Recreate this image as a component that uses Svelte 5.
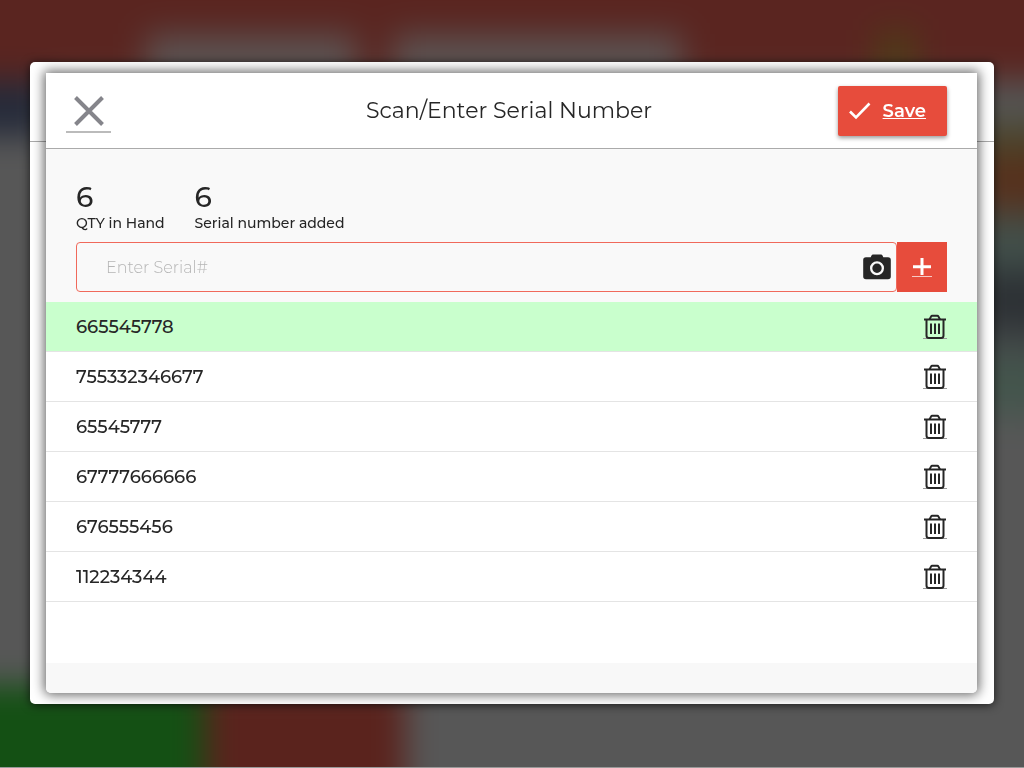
<script>
	let serials = $state([
		'665545778',
		'755332346677',
		'65545777',
		'67777666666',
		'676555456',
		'112234344'
	]);
	let quantity = 6;
	let value = $state('');

	function addSerial(event) {
		event.preventDefault();
		if (!value.trim()) return;
		serials.unshift(value.trim());
		value = '';
	}

	function removeSerial(index) {
		serials.splice(index, 1);
	}
</script>

<div class="backdrop" aria-hidden="true">
	<div class="page">
		<div class="page-header">
			<span class="pill"></span>
			<span class="pill wide"></span>
			<span class="dot"></span>
		</div>
		<div class="page-body">
			<span class="left-rail"></span>
			<span class="right-rail"></span>
		</div>
		<div class="page-footer">
			<span class="green"></span>
			<span class="red"></span>
		</div>
	</div>
</div>

<main>
	<div class="outer">
		<div class="dialog" role="dialog" aria-labelledby="title">
			<header>
				<button class="close" aria-label="Close">
					<svg width="30" height="30" viewBox="0 0 30 30">
						<path d="M1.500 1.500 28.500 28.500M28.500 1.500 1.500 28.500" stroke="#85858b" stroke-width="4" />
					</svg>
				</button>
				<h1 id="title">Scan/Enter Serial Number</h1>
				<button class="save">
					<svg width="22" height="18" viewBox="0 0 22 18">
						<path d="M1 9.5 7 15.5 20.5 1.5" fill="none" stroke="#fff" stroke-width="2.6" />
					</svg>
					<span>Save</span>
				</button>
			</header>

			<section class="entry">
				<div class="counts">
					<div>
						<strong>{quantity}</strong>
						<span>QTY in Hand</span>
					</div>
					<div>
						<strong>{serials.length}</strong>
						<span>Serial number added</span>
					</div>
				</div>
				<form onsubmit={addSerial}>
					<div class="field">
						<input type="text" aria-label="Serial number" placeholder="Enter Serial#" bind:value />
						<button type="button" class="camera" aria-label="Scan with camera">
							<svg width="28" height="26" viewBox="0 0 28 26">
								<path
									fill="#262626"
									fill-rule="evenodd"
									d="M10 .5h8q1 0 1.500 1l.8 1.700H25q2.800 0 2.800 2.800v16.500q0 2.800-2.800 2.800H3Q.2 25.300.2 22.500V6Q.2 3.200 3 3.200h4.700l.8-1.700Q9 .5 10 .5zM14 7.200a7 7 0 1 0 0 14 7 7 0 0 0 0-14zm0 2.300a4.700 4.700 0 1 1 0 9.400 4.700 4.700 0 0 1 0-9.400z"
								/>
							</svg>
						</button>
					</div>
					<button class="add" aria-label="Add serial number">
						<svg width="20" height="20" viewBox="0 0 20 20">
							<path d="M10 1v17M1 9.800h18" stroke="#fff" stroke-width="3" />
							<path d="M0 19.500h20" stroke="#fff" opacity="0.7" />
						</svg>
					</button>
				</form>
			</section>

			<ul>
				{#each serials as serial, index}
					<li class:latest={index === 0}>
						<span>{serial}</span>
						<button class="delete" aria-label="Delete {serial}" onclick={() => removeSerial(index)}>
							<svg width="24" height="26" viewBox="0 0 24 26" fill="none" stroke="#262626">
								<path d="M0 24.500h24" stroke="#999" />
								<path d="M1 5.500h22" stroke-width="2" />
								<path d="M6.500 5.500 8 2.600Q8.400 1.800 9.300 1.800h4.900q.9 0 1.300.8L17 5.500" stroke-width="2" />
								<path d="M3.500 6v15.500q0 2.500 2.500 2.500h12q2.500 0 2.500-2.500V6" stroke-width="2" />
								<path d="M8 9.500v10.500M12 9.500v10.500M16 9.500v10.500" stroke-width="2" />
							</svg>
						</button>
					</li>
				{/each}
			</ul>
			<footer></footer>
		</div>
	</div>
</main>

<style>
	:global(body) {
		margin: 0;
		background: #555;
	}
	.backdrop {
		position: fixed;
		inset: 0;
		overflow: hidden;
		border-bottom: 1px solid #999;
	}
	.page {
		display: flex;
		flex-direction: column;
		height: 100%;
		background: #575757;
		filter: blur(16px);
		/* push the blurred edges outside the window */
		margin: -40px;
		padding: 40px;
	}
	.page-header {
		display: flex;
		align-items: flex-end;
		gap: 36px;
		height: 80px;
		margin: -40px -40px 0;
		padding: 40px 40px 0 186px;
		background: #5a2520;
	}
	.pill {
		width: 24%;
		height: 46px;
		background: #5b5150;
	}
	.pill.wide {
		width: 33%;
	}
	.dot {
		width: 40px;
		height: 50px;
		margin-left: 18%;
		background: #4f3a18;
	}
	.page-body {
		flex: 1;
		display: flex;
		justify-content: space-between;
		margin: 0 -40px;
	}
	.left-rail {
		width: 90px;
		height: 56px;
		background: #262b3a;
	}
	.right-rail {
		width: 90px;
		background: linear-gradient(
			#555 0 30px,
			#4a4428 60px,
			#57301c 90px 115px,
			#42504b 150px 175px,
			#2c3034 205px 235px,
			#454a4a 265px,
			#43554c 290px 320px,
			#575757 350px
		);
	}
	.page-footer {
		display: flex;
		height: 82px;
		margin: 0 -40px -40px;
		padding-bottom: 40px;
	}
	.green {
		width: 245px;
		height: 130px;
		background: #145014;
	}
	.red {
		width: 200px;
		height: 130px;
		background: #5a231d;
	}

	main {
		position: relative;
		box-sizing: border-box;
		min-height: 100vh;
		padding: 62px 30px 64px;
		display: flex;
		font-family: Montserrat, Inter, 'Open Sans', sans-serif;
		color: #262626;
	}
	.outer {
		flex: 1;
		display: flex;
		padding: 11px 17px 11px 16px;
		border-radius: 5px;
		background: linear-gradient(#fff 79px, #aaa 79px 80px, #fff 80px);
		box-shadow: 0 1px 10px rgba(0, 0, 0, 0.7);
	}
	.dialog {
		flex: 1;
		min-width: 0;
		display: flex;
		flex-direction: column;
		background: #fff;
		border-radius: 0 0 5px 5px;
		box-shadow: 0 0 12px 2px rgba(0, 0, 0, 0.6);
	}
	button {
		border: 0;
		padding: 0;
		background: none;
		font: inherit;
		color: inherit;
		cursor: pointer;
	}
	svg {
		display: block;
	}

	header {
		display: grid;
		grid-template-columns: 1fr auto 1fr;
		align-items: center;
		height: 75px;
		padding: 0 30px 0 20px;
		border-bottom: 1px solid #aaa;
	}
	.close {
		display: flex;
		justify-content: center;
		width: 45px;
		padding: 7px 0 5px;
		border-bottom: 2px solid #bbb;
	}
	h1 {
		margin: 0;
		font-size: 22px;
		font-weight: 400;
		line-height: 28px;
		padding-left: 5px;
	}
	.save {
		justify-self: end;
		display: flex;
		align-items: center;
		gap: 12px;
		height: 50px;
		padding: 0 21px 0 11px;
		border-radius: 2px;
		background: #e74c3c;
		box-shadow: 0 2px 4px rgba(0, 0, 0, 0.4);
		color: #fff;
		font-size: 18px;
		font-weight: 600;
		text-decoration: underline;
	}

	.entry {
		padding: 32px 30px 10px;
		background: #f9f9f9;
	}
	.counts {
		display: flex;
		gap: 30px;
	}
	.counts div {
		display: flex;
		flex-direction: column;
	}
	.counts strong {
		font-size: 28px;
		font-weight: 500;
		line-height: 32px;
	}
	.counts span {
		font-size: 14px;
		font-weight: 500;
		line-height: 20px;
	}
	form {
		display: flex;
		margin-top: 9px;
	}
	.field {
		flex: 1;
		display: flex;
		align-items: center;
		box-sizing: border-box;
		height: 50px;
		padding-right: 5px;
		border: 1px solid #f0695b;
		border-radius: 4px;
	}
	input {
		flex: 1;
		min-width: 0;
		height: 100%;
		box-sizing: border-box;
		padding: 0 29px;
		border: 0;
		outline: 0;
		background: none;
		font: 300 16px Montserrat, Inter, 'Open Sans', sans-serif;
		color: #262626;
	}
	input::placeholder {
		color: #b5b5b5;
	}
	.add {
		display: flex;
		align-items: center;
		justify-content: center;
		width: 50px;
		height: 50px;
		background: #e74c3c;
	}

	ul {
		flex: 1;
		margin: 0;
		padding: 0;
		list-style: none;
	}
	li {
		display: flex;
		align-items: center;
		justify-content: space-between;
		height: 49px;
		padding: 0 30px;
		border-bottom: 1px solid #e4e4e4;
		font-size: 18px;
		font-weight: 500;
	}
	.latest {
		background: #c9ffcd;
	}
	footer {
		height: 30px;
		border-radius: 0 0 5px 5px;
		background: #f8f8f8;
	}
</style>
